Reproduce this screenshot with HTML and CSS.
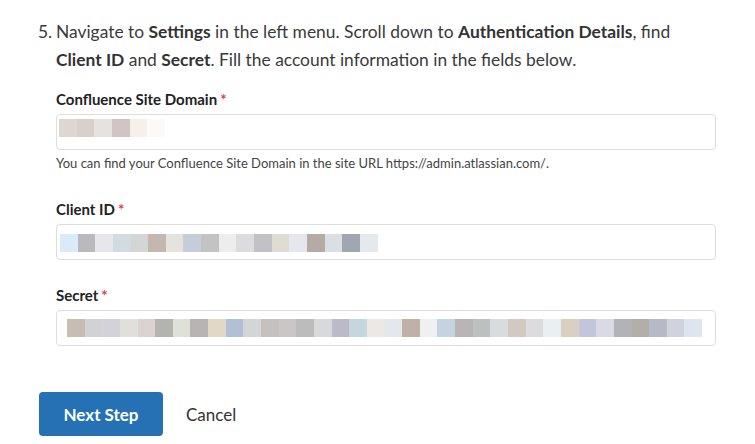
FILE: index.html
```html
<!DOCTYPE html>
<html lang="en">
<head>
  <meta charset="UTF-8">
  <meta name="viewport" content="width=device-width, initial-scale=1.0">
  <title>Confluence Connection</title>
  <link rel="stylesheet" href="styles.css">
</head>
<body>
  <div class="step">
    <span class="step-num">5.</span>
    <div class="step-body">
      <p class="step-text">Navigate to <b>Settings</b> in the left menu. Scroll down to <b>Authentication Details</b>, find <b>Client ID</b> and <b>Secret</b>. Fill the account information in the fields below.</p>

      <div class="field">
        <label class="field-label">Confluence Site Domain<span class="req">*</span></label>
        <div class="input">
          <div class="mask mask-domain">
            <span style="background:#ddd6d2"></span><span style="background:#d9cfcc"></span><span style="background:#e6e2df"></span><span style="background:#cfc5c4"></span><span style="background:#f6f1e8"></span><span style="background:#fbfaf7"></span>
          </div>
        </div>
        <div class="help">You can find your Confluence Site Domain in the site URL https://admin.atlassian.com/.</div>
      </div>

      <div class="field">
        <label class="field-label">Client ID<span class="req">*</span></label>
        <div class="input">
          <div class="mask mask-client">
            <span style="background:#dbeaf7"></span><span style="background:#b9babc"></span><span style="background:#e5e7ea"></span><span style="background:#d2dbdf"></span><span style="background:#d3d6d4"></span><span style="background:#c2b8b0"></span><span style="background:#e5e3de"></span><span style="background:#c6ccd8"></span><span style="background:#c4c3c3"></span><span style="background:#ecedec"></span><span style="background:#dcdcde"></span><span style="background:#c1c2c5"></span><span style="background:#dfddd3"></span><span style="background:#e6e7ec"></span><span style="background:#b5aba5"></span><span style="background:#dbdfe3"></span><span style="background:#a2a6b0"></span><span style="background:#e6e9ec"></span>
          </div>
        </div>
      </div>

      <div class="field">
        <label class="field-label">Secret<span class="req">*</span></label>
        <div class="input">
          <div class="mask mask-secret">
            <span style="background:#c6bdb3"></span><span style="background:#d2d1d3"></span><span style="background:#d3d3d7"></span><span style="background:#e0dfdb"></span><span style="background:#dbd3cf"></span><span style="background:#b4b3b1"></span><span style="background:#dfe0d7"></span><span style="background:#b8b4b3"></span><span style="background:#e2d8c8"></span><span style="background:#b2c0d6"></span><span style="background:#d4d5d7"></span><span style="background:#c5c1be"></span><span style="background:#cac6c5"></span><span style="background:#bcbcbc"></span><span style="background:#d8d9dd"></span><span style="background:#b9bbc9"></span><span style="background:#c5d6e1"></span><span style="background:#ede8e3"></span><span style="background:#e5e8eb"></span><span style="background:#bfb1a8"></span><span style="background:#f0f0f0"></span><span style="background:#c3d3df"></span><span style="background:#b7b5b5"></span><span style="background:#bbc1c0"></span><span style="background:#d8dcdf"></span><span style="background:#d2c9c2"></span><span style="background:#dcdcdf"></span><span style="background:#e8f0f2"></span><span style="background:#d9d0c2"></span><span style="background:#c1c6da"></span><span style="background:#d8dbe3"></span><span style="background:#b1b3b6"></span><span style="background:#b2aea8"></span><span style="background:#b7bac6"></span><span style="background:#d0d3de"></span><span style="background:#dfe5ef"></span>
          </div>
        </div>
      </div>
    </div>
  </div>

  <div class="actions">
    <button class="btn-primary">Next Step</button>
    <button class="btn-link">Cancel</button>
  </div>
</body>
</html>
```

FILE: styles.css
```css
body {
  margin: 0;
  font-family: Lato, "Open Sans", sans-serif;
  color: #3a3a3a;
  background-color: #fff;
}

.step {
  display: flex;
  padding: 18px 39px 0 38px;
  font-size: 17.4px;
  line-height: 28px;
}

.step-num {
  width: 18px;
  flex-shrink: 0;
}

.step-body {
  flex-grow: 1;
}

.step-text {
  margin: 0;
}

.step-text b {
  color: #333;
}

.field {
  margin-top: 15px;
}

.field + .field {
  margin-top: 27px;
}

.field:last-child {
  margin-top: 25px;
}

.field-label {
  display: block;
  font-size: 15px;
  line-height: 20px;
  font-weight: bold;
  color: #222;
  margin-bottom: 5px;
}

.req {
  color: #e5394f;
  font-size: 15px;
  margin-left: 3px;
}

.input {
  height: 36px;
  box-sizing: border-box;
  border: 1px solid #dedede;
  border-radius: 4px;
  background-color: #fff;
}

.mask {
  display: flex;
}

.mask span {
  width: 17.65px;
  height: 18px;
}

.mask-domain {
  margin: 4px 0 0 2px;
}

.mask-client {
  margin: 9px 0 0 3px;
}

.mask-secret {
  margin: 8px 0 0 10px;
}

.help {
  margin-top: 4px;
  font-size: 13px;
  line-height: 18px;
  color: #444;
}

.actions {
  display: flex;
  align-items: center;
  margin: 46px 0 0 39px;
}

.btn-primary {
  width: 124px;
  height: 44px;
  border: none;
  border-radius: 4px;
  background-color: #2571b4;
  color: #fff;
  font-family: Lato, sans-serif;
  font-size: 17px;
  font-weight: bold;
  cursor: pointer;
}

.btn-link {
  margin-left: 17px;
  padding: 0 6px;
  border: none;
  background: none;
  color: #333;
  font-family: Lato, sans-serif;
  font-size: 17px;
  cursor: pointer;
}
```
